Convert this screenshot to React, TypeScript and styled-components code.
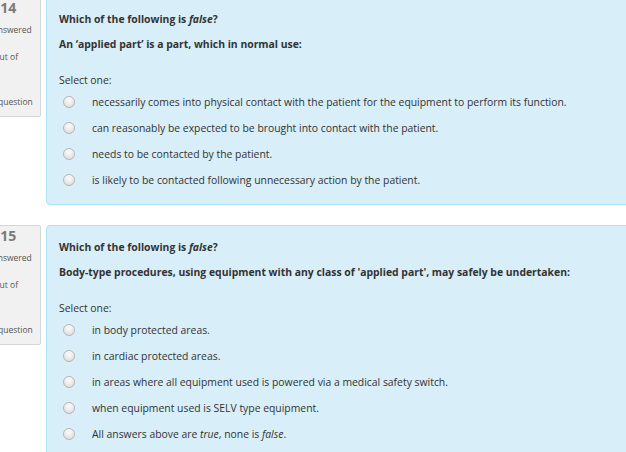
import React from "react";
import styled, { createGlobalStyle } from "styled-components";

const GlobalStyle = createGlobalStyle`
  html, body { margin: 0; padding: 0; background: #ffffff; overflow: hidden; }
  body { font-family: "Open Sans", "DejaVu Sans", sans-serif; color: #333333; }
`;

const Page = styled.div`
  display: flex;
  flex-direction: column;
  gap: 20px;
  margin-top: -3px;
  margin-left: -44px;
  width: 760px;
`;

const Question = styled.div`
  display: flex;
  align-items: flex-start;
  gap: 5px;
`;

const Info = styled.div`
  flex: 0 0 auto;
  width: 71px;
  box-sizing: content-box;
  padding: 3px 7px 8px 5px;
  background: #f1f1f1;
  border: 1px solid #d6d6d6;
  border-radius: 2px;
  font-size: 8.5px;
  line-height: 12px;
  color: #555555;
`;

const QNo = styled.h3`
  margin: 0 0 7px;
  font-size: 8.5px;
  line-height: 14px;
  font-weight: 400;
  white-space: nowrap;
  color: #666666;
  span {
    font-size: 14px;
    font-weight: 700;
    color: #7a7a7a;
  }
`;

const InfoLine = styled.div<{ $gap?: number }>`
  margin-bottom: ${(p) => p.$gap ?? 12}px;
  white-space: nowrap;
`;

const FlagIcon = styled.svg`
  width: 12px;
  height: 12px;
  margin-right: 6px;
  vertical-align: -2px;
`;

const Content = styled.div`
  flex: 1 1 auto;
  background: #d8eef8;
  border: 1px solid #aee1f3;
  border-radius: 4px;
  padding: 11px 12px 11px;
`;

const QText = styled.p`
  margin: 0 0 5px;
  font-size: 10.4px;
  font-weight: 700;
  line-height: 20px;
  color: #333333;
  em { font-style: italic; }
`;

const Prompt = styled.div`
  margin-top: 17px;
  font-size: 10.4px;
  line-height: 18px;
  color: #333333;
`;

const Option = styled.label`
  display: flex;
  align-items: center;
  height: 26px;
  font-size: 10.4px;
  color: #333333;
  em { font-style: italic; }
`;

const Radio = styled.span`
  flex: 0 0 auto;
  width: 10px;
  height: 10px;
  margin-left: 4px;
  margin-right: 17px;
  border-radius: 50%;
  border: 1px solid #b5b5b5;
  background: radial-gradient(circle at 50% 35%, #fbfbfb 0%, #e6e6e6 60%, #d6d6d6 100%);
  box-shadow: inset 0 1px 1px rgba(255, 255, 255, 0.8);
`;

type Q = {
  no: number;
  lead: React.ReactNode;
  stem: React.ReactNode;
  options: React.ReactNode[];
};

const questions: Q[] = [
  {
    no: 14,
    lead: (
      <>
        Which of the following is <em>false</em>?
      </>
    ),
    stem: <>An ‘applied part’ is a part, which in normal use:</>,
    options: [
      "necessarily comes into physical contact with the patient for the equipment to perform its function.",
      "can reasonably be expected to be brought into contact with the patient.",
      "needs to be contacted by the patient.",
      "is likely to be contacted following unnecessary action by the patient.",
    ],
  },
  {
    no: 15,
    lead: (
      <>
        Which of the following is <em>false</em>?
      </>
    ),
    stem: (
      <>
        Body-type procedures, using equipment with any class of 'applied part', may safely be
        undertaken:
      </>
    ),
    options: [
      "in body protected areas.",
      "in cardiac protected areas.",
      "in areas where all equipment used is powered via a medical safety switch.",
      "when equipment used is SELV type equipment.",
      <>
        All answers above are <em>true</em>, none is <em>false</em>.
      </>,
    ],
  },
];

export default function App() {
  return (
    <>
      <GlobalStyle />
      <Page>
        {questions.map((q) => (
          <Question key={q.no}>
            <Info>
              <QNo>
                Question <span>{q.no}</span>
              </QNo>
              <InfoLine $gap={15}>Not yet answered</InfoLine>
              <InfoLine $gap={20}>
                Marked out of
                <br />
                1.00
              </InfoLine>
              <InfoLine $gap={0}>
                <FlagIcon viewBox="0 0 12 12">
                  <path d="M2 1v10" stroke="#999" strokeWidth="1.2" fill="none" />
                  <path d="M2.6 1.5h7l-1.8 2.5 1.8 2.5h-7z" fill="none" stroke="#999" strokeWidth="1" />
                </FlagIcon>
                Flag question
              </InfoLine>
            </Info>
            <Content>
              <QText>{q.lead}</QText>
              <QText>{q.stem}</QText>
              <Prompt>Select one:</Prompt>
              {q.options.map((o, i) => (
                <Option key={i}>
                  <Radio />
                  <span>{o}</span>
                </Option>
              ))}
            </Content>
          </Question>
        ))}
      </Page>
    </>
  );
}
